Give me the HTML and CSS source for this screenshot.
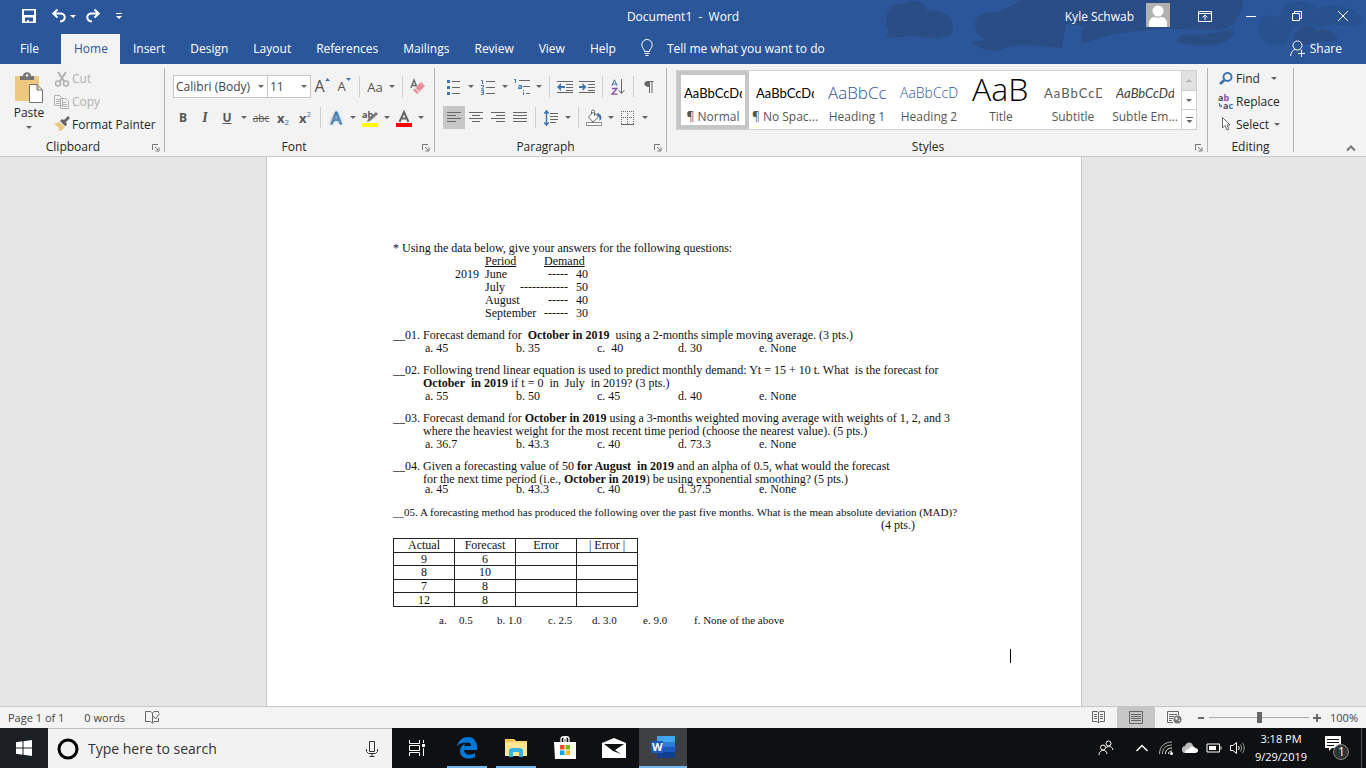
FILE: index.html
```
<!DOCTYPE html>
<html lang="en">

<head>
    <meta charset="UTF-8">
    <meta name="viewport" content="width=device-width, initial-scale=1.0">
    <title>Document1 - Word</title>
    <link rel="stylesheet" href="styles.css">
</head>

<body>
    <header class="header">
        <svg class="header-art" width="490" height="64" viewBox="0 0 490 64">
            <path d="M10 22C10 8 18 2 28 4C38 -2 48 0 52 12C62 8 78 14 77 26C78 34 72 38 68 36C64 42 40 34 24 37C16 37 12 40 10 38L13 31C11 29 10 26 10 22Z" />
            <path d="M99 24C99 14 110 12 120 12C140 6 142 0 146 0H367C366 12 362 22 352 28C340 34 300 26 274 30C234 32 218 40 206 44C205 36 206 30 208 26L190 24L186 48C160 46 142 42 124 50C110 52 102 48 95 42C98 40 106 42 110 40C102 36 99 30 99 24Z" />
            <path d="M306 34C326 36 342 32 356 29C360 32 356 38 350 41C340 46 320 48 300 42Z" />
            <path d="M418 38C420 26 434 22 440 30C452 28 462 32 461 40C450 44 438 38 432 44C424 46 418 44 418 38Z" />
            <path class="art-light" d="M384 36C376 18 394 10 404 18C404 -2 436 -4 440 10C452 0 484 6 486 22C476 32 458 20 446 28C430 20 412 26 410 44C398 46 388 44 384 36Z" />
        </svg>
        <div class="titlebar">
            <div class="title-side quick-access">
                <button aria-label="Save"><svg width="16" height="16" viewBox="0 0 16 16"><path fill="#fff" fill-rule="evenodd" d="M1 1H15V15H1ZM3 2.500V7H13V2.500ZM4 9.500V13.500H6V12H8V13.500H12V9.500Z" /></svg></button>
                <button aria-label="Undo"><svg width="16" height="16" viewBox="0 0 16 16"><path class="qa-line" d="M2 5.500H9.500C15 5.500 15.500 13 9 13.500M6.500 1.500L2.300 5.500L6.500 9.500" /></svg></button>
                <span class="caret white"></span>
                <button aria-label="Redo"><svg width="16" height="16" viewBox="0 0 16 16"><path class="qa-line" d="M14 5.500H6.500C1 5.500 .5 13 7 13.500M9.500 1.500L13.700 5.500L9.500 9.500" /></svg></button>
                <button aria-label="Customize toolbar"><svg width="8" height="8" viewBox="0 0 8 8"><path fill="#fff" d="M1 1H7V2H1ZM1 4H7L4 7Z" /></svg></button>
            </div>
            <div class="doc-title">Document1&nbsp; -&nbsp; Word</div>
            <div class="title-side account">
                <span>Kyle Schwab</span>
                <svg class="avatar" width="24" height="24" viewBox="0 0 24 24"><path fill="#b1b1b1" d="M0 0H24V24H0Z" /><circle cx="12" cy="8" r="5.500" fill="#fff" /><path fill="#fff" d="M3 24C2 17 5 14 9 14C11 15 13 15 15 14C19 14 22 17 21 24Z" /></svg>
                <button class="window-button" aria-label="Ribbon options"><svg width="14" height="12" viewBox="0 0 14 12"><path class="win-line" d="M.5 1.500H13.500V11.500H.5ZM.5 3.500H13.500M7 10V5M4.500 7.500L7 5L9.500 7.500" /></svg></button>
                <button class="window-button" aria-label="Minimize"><svg width="12" height="12" viewBox="0 0 12 12"><path class="win-line" d="M1 6.500H11" /></svg></button>
                <button class="window-button" aria-label="Restore"><svg width="12" height="12" viewBox="0 0 12 12"><path class="win-line" d="M1.500 3.500H8.500V10.500H1.500ZM3.500 3.500V1.500H10.500V8.500H8.500" /></svg></button>
                <button class="window-button" aria-label="Close"><svg width="12" height="12" viewBox="0 0 12 12"><path class="win-line" d="M1 1L11 11M11 1L1 11" /></svg></button>
            </div>
        </div>
        <nav class="tabs">
            <button class="tab file-tab">File</button>
            <button class="tab active">Home</button>
            <button class="tab">Insert</button>
            <button class="tab">Design</button>
            <button class="tab">Layout</button>
            <button class="tab">References</button>
            <button class="tab">Mailings</button>
            <button class="tab">Review</button>
            <button class="tab">View</button>
            <button class="tab">Help</button>
            <button class="tab tell-me"><svg width="12" height="18" viewBox="0 0 12 18"><path class="win-line" d="M3.500 12.500C3.500 10 .8 9 .8 5.700A5.200 5.200 0 0 1 11.200 5.700C11.200 9 8.500 10 8.500 12.500ZM3.500 14.500H8.500M4.500 16.500H7.500" /></svg>Tell me what you want to do</button>
            <button class="share"><svg width="16" height="17" viewBox="0 0 16 17"><circle class="win-line" cx="7.500" cy="5.500" r="4.500" /><path class="win-line" d="M.6 16C.8 12 3 9.800 5.500 9.300M9.500 9.300L10.500 10M8 13.500H15M11.500 10V17" /></svg>Share</button>
        </nav>
    </header>

    <div class="ribbon">
        <section class="group clipboard">
            <div class="group-body">
                <button class="paste">
                    <svg width="30" height="32" viewBox="0 0 30 32"><path fill="#edc87e" d="M1 5H25V30H1Z" /><path fill="#737373" d="M6 9V5H9C9 0 17 0 17 5H20V9Z" /><circle cx="13" cy="4.500" r="1.300" fill="#f3f3f3" /><path fill="#fff" stroke="#737373" d="M15.500 13.500H23L28.500 19V31.500H15.500ZM23 13.500V19H28.500" /></svg>
                    Paste
                    <span class="caret"></span>
                </button>
                <div class="command-list">
                    <button class="command disabled"><svg width="16" height="16" viewBox="0 0 16 16"><path fill="none" stroke="#b1b1b1" stroke-width="2" d="M4 1L10.500 11M12 1L5.500 11" /><g fill="none" stroke="#b1b1b1" stroke-width="1.500"><circle cx="4" cy="12.500" r="2.500" /><circle cx="12" cy="12.500" r="2.500" /></g></svg>Cut</button>
                    <button class="command disabled"><svg width="16" height="16" viewBox="0 0 16 16"><path fill="#f3f3f3" stroke="#b1b1b1" d="M.5 1.500H5.500L8.500 4.500V11.500H.5ZM2 5.500H6M2 7.500H6M2 9.500H6M6.500 4.500H11.500L14.500 7.500V14.500H6.500ZM8 8.500H12M8 10.500H13M8 12.500H13" /></svg>Copy</button>
                    <button class="command"><svg width="16" height="16" viewBox="0 0 16 16"><path fill="#edc87e" d="M0 8L5 6L11 11L7 15L4 14L5 12Z" /><path fill="#666" d="M6 5L8 3L10 4L14 0L16 2L12 6L13 9L11 10Z" /></svg>Format Painter</button>
                </div>
            </div>
            <div class="group-name">Clipboard<svg class="launcher" width="8" height="8" viewBox="0 0 8 8"><path fill="none" stroke="#777" d="M.5 6V.5H6M3 3L6 6M7 3.500V7H3.500" /></svg></div>
        </section>

        <section class="group font-group">
            <div class="group-body tool-rows">
                <div class="tool-row">
                    <label class="combo font-name"><select aria-label="Font"><option>Calibri (Body)</option></select><span class="caret"></span></label>
                    <label class="combo font-size"><select aria-label="Font size"><option>11</option></select><span class="caret"></span></label>
                    <button class="tool grow" aria-label="Grow font">A<svg width="5" height="3" viewBox="0 0 5 3"><path fill="#3f74b1" d="M0 3L2.500 0L5 3Z" /></svg></button>
                    <button class="tool grow shrink" aria-label="Shrink font">A<svg width="5" height="3" viewBox="0 0 5 3"><path fill="#3f74b1" d="M0 0L2.500 3L5 0Z" /></svg></button>
                    <span class="divider"></span>
                    <button class="tool change-case" aria-label="Change case">Aa</button><span class="caret"></span>
                    <span class="divider"></span>
                    <button class="tool" aria-label="Clear formatting"><svg width="16" height="16" viewBox="0 0 16 16"><path fill="none" stroke="#666" stroke-width="1.400" d="M1 9L4 1L6.500 7M2 6.500H6" /><path fill="#e8909c" d="M3 11L11 3L15 7L7 15Z" /><path stroke="#f3f3f3" d="M5 9L9 13" /></svg></button>
                </div>
                <div class="tool-row">
                    <button class="tool"><b>B</b></button>
                    <button class="tool italic">I</button>
                    <button class="tool underline">U</button><span class="caret"></span>
                    <button class="tool strike">abc</button>
                    <button class="tool script"><b>x</b><sub>2</sub></button>
                    <button class="tool script"><b>x</b><sup>2</sup></button>
                    <span class="divider"></span>
                    <button class="tool text-effect">A</button><span class="caret"></span>
                    <button class="tool" aria-label="Highlight"><svg width="16" height="20" viewBox="0 0 16 20"><text class="icon-text" x="0" y="10">ab</text><path fill="#777" d="M14 4L16 6L8 13L5 14L6 11Z" /><path fill="#ffff00" d="M0 15H16V19H0Z" /></svg></button><span class="caret"></span>
                    <button class="tool" aria-label="Font color"><svg width="16" height="20" viewBox="0 0 16 20"><path fill="none" stroke="#666" stroke-width="2" d="M3.500 14L8 4L12.500 14M5 10.500H11" /><path fill="#f00" d="M0 15H16V19H0Z" /></svg></button><span class="caret"></span>
                </div>
            </div>
            <div class="group-name">Font<svg class="launcher" width="8" height="8" viewBox="0 0 8 8"><path fill="none" stroke="#777" d="M.5 6V.5H6M3 3L6 6M7 3.500V7H3.500" /></svg></div>
        </section>

        <section class="group paragraph-group">
            <div class="group-body tool-rows">
                <div class="tool-row">
                    <button class="tool" aria-label="Bullets"><svg width="14" height="16" viewBox="0 0 14 16"><path fill="#3f74b1" d="M0 1H3V4H0ZM0 7H3V10H0ZM0 13H3V16H0Z" /><path class="line" d="M5 2.500H13M5 8.500H13M5 14.500H13" /></svg></button><span class="caret"></span>
                    <button class="tool" aria-label="Numbering"><svg width="16" height="16" viewBox="0 0 16 16"><path class="blue-line" d="M1 1.500H2.500V5M1 6.500H3.500V8L1.500 10H4M1 11.500H3.500V15.500H1M1.500 13.500H3.500" /><path class="line" d="M6 2.500H15M6 8.500H15M6 14.500H15" /></svg></button><span class="caret"></span>
                    <button class="tool" aria-label="Multilevel list"><svg width="16" height="16" viewBox="0 0 16 16"><path class="blue-line" d="M0 .5H1.500V4M4.500 6.500H7.500V9.500H4.500V8H7M9.500 13V16M9.500 11V12" /><path class="line" d="M5 1.500H16M9 7.500H16M12 14.500H16" /></svg></button><span class="caret"></span>
                    <span class="divider"></span>
                    <button class="tool" aria-label="Decrease indent"><svg width="16" height="12" viewBox="0 0 16 12"><path class="line" d="M0 .5H16M9 3.500H16M9 6.500H16M9 9.500H16M0 11.500H16" /><path fill="#3f74b1" d="M0 6L4 2V5H8V7H4V10Z" /></svg></button>
                    <button class="tool" aria-label="Increase indent"><svg width="16" height="12" viewBox="0 0 16 12"><path class="line" d="M0 .5H16M9 3.500H16M9 6.500H16M9 9.500H16M0 11.500H16" /><path fill="#3f74b1" d="M7.500 6L3.500 2V5H0V7H3.500V10Z" /></svg></button>
                    <span class="divider"></span>
                    <button class="tool" aria-label="Sort"><svg width="14" height="16" viewBox="0 0 14 16"><path class="blue-line" d="M.8 7L3.500 .8L6.200 7M1.500 5H5.500" /><path fill="none" stroke="#8a4fae" stroke-width="1.300" d="M1 9.500H6L1 15.200H6.500" /><path class="line" d="M10.500 0V14M7.500 11L10.500 14.500L13.500 11" /></svg></button>
                    <span class="divider"></span>
                    <button class="tool" aria-label="Show marks"><svg width="10" height="14" viewBox="0 0 10 14"><path fill="#666" d="M9.500 1V2H8.500V13H7.500V2H6V13H5V7C-1 7 -1 1 4 1Z" /></svg></button>
                </div>
                <div class="tool-row">
                    <button class="tool selected" aria-label="Align left"><svg width="14" height="12" viewBox="0 0 14 12"><path class="line" d="M0 .5H14M0 3.500H9M0 6.500H14M0 9.500H9" /></svg></button>
                    <button class="tool" aria-label="Center"><svg width="14" height="12" viewBox="0 0 14 12"><path class="line" d="M0 .5H14M3 3.500H11M0 6.500H14M3 9.500H11" /></svg></button>
                    <button class="tool" aria-label="Align right"><svg width="14" height="12" viewBox="0 0 14 12"><path class="line" d="M0 .5H14M5 3.500H14M0 6.500H14M5 9.500H14" /></svg></button>
                    <button class="tool" aria-label="Justify"><svg width="14" height="12" viewBox="0 0 14 12"><path class="line" d="M0 .5H14M0 3.500H14M0 6.500H14M0 9.500H14" /></svg></button>
                    <span class="divider"></span>
                    <button class="tool" aria-label="Line spacing"><svg width="14" height="16" viewBox="0 0 14 16"><path class="blue-line" stroke-width="1.500" d="M2.500 1V15M.3 3.500L2.500 1L4.700 3.500M.3 12.500L2.500 15L4.700 12.500" /><path class="line" d="M6 3.500H14M6 6.500H14M6 9.500H14M6 12.500H12" /></svg></button><span class="caret"></span>
                    <span class="divider"></span>
                    <button class="tool" aria-label="Shading"><svg width="16" height="16" viewBox="0 0 16 16"><path fill="#fff" stroke="#666" d="M2.500 7L7.500 2L12.500 7L7 12ZM5.500 4V1.500A1.500 1.500 0 0 1 8.500 1.500V6" /><path fill="#3f74b1" d="M11 3C16 4 17 9 13.500 11C14 8 13 6 11 5Z" /><path fill="#fff" stroke="#888" d="M.5 12.500H15.500V15.500H.5Z" /></svg></button><span class="caret"></span>
                    <button class="tool" aria-label="Borders"><svg width="14" height="14" viewBox="0 0 14 14"><path class="line" stroke-dasharray="1 1" d="M0 .5H13M.5 0V13M12.500 0V13M6.500 0V13M0 6.500H13" /><path class="line" d="M0 13.500H13" /></svg></button><span class="caret"></span>
                </div>
            </div>
            <div class="group-name">Paragraph<svg class="launcher" width="8" height="8" viewBox="0 0 8 8"><path fill="none" stroke="#777" d="M.5 6V.5H6M3 3L6 6M7 3.500V7H3.500" /></svg></div>
        </section>

        <section class="group styles-group">
            <div class="group-body">
                <div class="gallery">
                    <button class="style-item chosen"><span class="sample">AaBbCcDd</span>¶ Normal</button>
                    <button class="style-item"><span class="sample">AaBbCcDd</span>¶ No Spac...</button>
                    <button class="style-item"><span class="sample heading-one">AaBbCc</span>Heading 1</button>
                    <button class="style-item"><span class="sample heading-two">AaBbCcD</span>Heading 2</button>
                    <button class="style-item"><span class="sample title-sample">AaB</span>Title</button>
                    <button class="style-item"><span class="sample subtitle">AaBbCcD</span>Subtitle</button>
                    <button class="style-item"><span class="sample subtle">AaBbCcDd</span>Subtle Em...</button>
                    <div class="gallery-scroll">
                        <button class="off" aria-label="Up"><span class="caret up"></span></button>
                        <button aria-label="Down"><span class="caret"></span></button>
                        <button aria-label="More"><svg width="8" height="8" viewBox="0 0 8 8"><path fill="#666" d="M1 1H8V2H1ZM1.500 4H7.500L4.500 7Z" /></svg></button>
                    </div>
                </div>
            </div>
            <div class="group-name">Styles<svg class="launcher" width="8" height="8" viewBox="0 0 8 8"><path fill="none" stroke="#777" d="M.5 6V.5H6M3 3L6 6M7 3.500V7H3.500" /></svg></div>
        </section>

        <section class="group editing">
            <div class="group-body">
                <div class="command-list">
                    <button class="command"><svg width="16" height="16" viewBox="0 0 16 16"><g fill="none" stroke="#3f74b1"><circle cx="9.500" cy="6" r="4" stroke-width="2" /><path stroke-width="3" d="M6.500 9L2 13" /></g></svg>Find<span class="caret spaced"></span></button>
                    <button class="command"><svg width="16" height="16" viewBox="0 0 16 16"><text class="icon-text" x="0" y="7">a<tspan fill="#8a4fae">b</tspan></text><text class="icon-text" x="5" y="15">a<tspan fill="#3f74b1">c</tspan></text><path class="blue-line" d="M1.500 9V12H4M2.500 10.500L4 12L2.500 13.500" /></svg>Replace</button>
                    <button class="command"><svg width="16" height="16" viewBox="0 0 16 16"><path fill="#fff" stroke="#666" d="M4.500 1.500V12L7 9.500L9 14L11 13L9 9H12Z" /></svg>Select<span class="caret"></span></button>
                </div>
            </div>
            <div class="group-name">Editing</div>
        </section>
        <button class="collapse" aria-label="Collapse ribbon"><svg width="10" height="7" viewBox="0 0 10 7"><path fill="none" stroke="#777" stroke-width="2" d="M1 5.500L5 1.500L9 5.500" /></svg></button>
    </div>

    <main class="canvas">
        <article class="page">
            <div class="question">
                <p>* Using the data below, give your answers for the following questions:</p>
                <div class="demand"><span></span><u>Period</u><u>Demand</u></div>
                <div class="demand"><span>2019</span><span>June</span><span class="dashes">-----</span><span>40</span></div>
                <div class="demand"><span></span><span>July</span><span class="dashes">------------</span><span>50</span></div>
                <div class="demand"><span></span><span>August</span><span class="dashes">-----</span><span>40</span></div>
                <div class="demand"><span></span><span>September</span><span class="dashes">------</span><span>30</span></div>
            </div>
            <div class="question">
                <p>__01. Forecast demand for&nbsp; <b>October in 2019</b>&nbsp; using a 2-months simple moving average. (3 pts.)</p>
                <div class="choices"><span>a. 45</span><span>b. 35</span><span>c.&nbsp; 40</span><span>d. 30</span><span>e. None</span></div>
            </div>
            <div class="question">
                <p>__02. Following trend linear equation is used to predict monthly demand: Yt = 15 + 10 t. What&nbsp; is the forecast for</p>
                <p class="indent"><b>October&nbsp; in 2019</b> if t = 0&nbsp; in&nbsp; July&nbsp; in 2019? (3 pts.)</p>
                <div class="choices"><span>a. 55</span><span>b. 50</span><span>c. 45</span><span>d. 40</span><span>e. None</span></div>
            </div>
            <div class="question">
                <p>__03. Forecast demand for <b>October in 2019</b> using a 3-months weighted moving average with weights of 1, 2, and 3</p>
                <p class="indent">where the heaviest weight for the most recent time period (choose the nearest value). (5 pts.)</p>
                <div class="choices"><span>a. 36.7</span><span>b. 43.3</span><span>c. 40</span><span>d. 73.3</span><span>e. None</span></div>
            </div>
            <div class="question">
                <p>__04. Given a forecasting value of 50 <b>for August&nbsp; in 2019</b> and an alpha of 0.5, what would the forecast</p>
                <p class="indent">for the next time period (i.e., <b>October in 2019</b>) be using exponential smoothing? (5 pts.)</p>
                <div class="choices tight"><span>a. 45</span><span>b. 43.3</span><span>c. 40</span><span>d. 37.5</span><span>e. None</span></div>
            </div>
            <div class="question final">
                <p class="small">__05. A forecasting method has produced the following over the past five months. What is the mean absolute deviation (MAD)?</p>
                <p class="points">(4 pts.)</p>
            </div>
            <table class="error-table">
                <tr><th>Actual</th><th>Forecast</th><th>Error</th><th>| Error |</th></tr>
                <tr><td>9</td><td>6</td><td></td><td></td></tr>
                <tr><td>8</td><td>10</td><td></td><td></td></tr>
                <tr><td>7</td><td>8</td><td></td><td></td></tr>
                <tr><td>12</td><td>8</td><td></td><td></td></tr>
            </table>
            <div class="choices small last"><span>a.</span><span>0.5</span><span>b. 1.0</span><span>c. 2.5</span><span>d. 3.0</span><span>e. 9.0</span><span>f. None of the above</span></div>
            <div class="insertion"><span></span></div>
        </article>
    </main>

    <footer class="statusbar">
        <span>Page 1 of 1</span>
        <span>0 words</span>
        <svg width="15" height="13" viewBox="0 0 15 13"><path class="line" d="M7.500 11.500V2L5.500 .5H.5V10.500H5.500L7.500 12.500L9 10.500H13.500V7M7.500 2L9 .5H13.500V2M8 5L10.500 8L14.500 2.500" /></svg>
        <div class="view-buttons">
            <button aria-label="Read mode"><svg width="13" height="13" viewBox="0 0 13 13"><path class="line" d="M6.500 1.500V12M.5 .5H5L6.500 1.500L8 .5H12.500V10.500H8L6.500 12L5 10.500H.5ZM2 3.500H5M2 5.500H5M2 7.500H5M8 3.500H11M8 5.500H11M8 7.500H11" /></svg></button>
            <button class="selected" aria-label="Print layout"><svg width="14" height="13" viewBox="0 0 14 13"><path class="line" d="M.5 .5H13.500V12.500H.5ZM2 3.500H12M2 5.500H12M2 7.500H12M2 9.500H12" /></svg></button>
            <button aria-label="Web layout"><svg width="15" height="13" viewBox="0 0 15 13"><path class="line" d="M6 11.500H.5V.5H11.500V4M2 3.500H10M2 5.500H7M2 7.500H6M2 9.500H5" /><circle cx="10.500" cy="8.500" r="4" fill="#777" /><path fill="#f3f3f3" d="M8 7L10 6L11 8L9 9ZM11 10L13 8L13 10Z" /></svg></button>
        </div>
        <button class="zoom-step" aria-label="Zoom out"><svg width="8" height="8" viewBox="0 0 8 8"><path fill="#666" d="M1 3H7V5H1Z" /></svg></button>
        <input class="zoom-slider" type="range" min="0" max="100" value="50" aria-label="Zoom">
        <button class="zoom-step" aria-label="Zoom in"><svg width="8" height="8" viewBox="0 0 8 8"><path fill="#666" d="M0 3H3V0H5V3H8V5H5V8H3V5H0Z" /></svg></button>
        <span class="zoom-value">100%</span>
    </footer>

    <div class="taskbar">
        <button class="start" aria-label="Start"><svg width="16" height="16" viewBox="0 0 16 16"><path fill="#fff" d="M0 2.300L6.500 1.300V7.500H0ZM7.500 1.200L16 0V7.500H7.500ZM0 8.500H6.500V14.700L0 13.700ZM7.500 8.500H16V16L7.500 14.800Z" /></svg></button>
        <label class="search">
            <svg width="22" height="22" viewBox="0 0 22 22"><circle cx="11" cy="11" r="9" fill="none" stroke="#000" stroke-width="3" /></svg>
            <input type="text" placeholder="Type here to search">
            <svg width="12" height="16" viewBox="0 0 12 16"><path fill="none" stroke="#333" d="M3.500 .5H8.500V10.500H3.500ZM.5 8V10.500L2.500 12.500H9.500L11.500 10.500V8M6 12.500V15.500M3.500 15.500H8.500" /></svg>
        </label>
        <div class="tasks">
            <button class="task" aria-label="Task view"><svg width="18" height="16" viewBox="0 0 18 16"><path class="win-line" d="M1.500 0V3.500H11.500V0M1.500 16V12.500H11.500V16M1.500 5.500H11.500V10.500H1.500ZM15.500 0V3M15.500 8V16" /><path fill="#fff" d="M14 4H17V7H14Z" /></svg></button>
            <button class="task open" aria-label="Edge"><svg width="22" height="22" viewBox="0 0 22 22"><path fill="#0078d7" fill-rule="evenodd" d="M1 10C2 3 7 0 12 0C18 0 21 5 21 10V13H8C8 18 15 19 19 16V20C13 23 4 22 4 14C4 10 7 7 11 6C5 5 2 8 1 10ZM8 9H15C15 4 9 5 8 9Z" /></svg></button>
            <button class="task open" aria-label="File Explorer"><svg width="22" height="20" viewBox="0 0 22 20"><path fill="#f8d775" d="M0 1H9L11 3H22V18H0Z" /><path fill="#ffe795" d="M0 5H22V18H0Z" /><path fill="#f0b429" d="M1 2H8V3H1Z" /><path fill="#34b4e3" d="M4 19V12L6 10H16L18 12V19H14V14H8V19Z" /></svg></button>
            <button class="task" aria-label="Store"><svg width="24" height="24" viewBox="0 0 24 24"><path fill="none" stroke="#fff" stroke-width="1.300" d="M8 6V3C8 0 13 0 13 3V6M11 6V3C11 0 16 0 16 3V6" /><path fill="#fff" d="M1 6H23V23H2Z" /><path fill="#f25022" d="M7 9H11.500V13.500H7Z" /><path fill="#7fba00" d="M12.500 9H17V13.500H12.500Z" /><path fill="#00a4ef" d="M7 14.500H11.500V19H7Z" /><path fill="#ffb900" d="M12.500 14.500H17V19H12.500Z" /></svg></button>
            <button class="task" aria-label="Mail"><svg width="24" height="20" viewBox="0 0 24 20"><path fill="#fff" d="M0 5L12 0L24 5V20H0Z" /><path fill="#0f1011" d="M2 6H22L13 12L19 16L11 13Z" /></svg></button>
            <button class="task current" aria-label="Word"><svg width="24" height="22" viewBox="0 0 24 22"><path fill="#41a5ee" d="M6 0H24V6H6Z" /><path fill="#2b7cd3" d="M6 6H24V11H6Z" /><path fill="#185abd" d="M6 11H24V16H6Z" /><path fill="#103f91" d="M6 16H24V22H6Z" /><path fill="#1e5bb8" d="M0 5H12V17H0Z" /><text class="word-letter" x="1" y="15">W</text></svg></button>
        </div>
        <div class="tray">
            <button class="people" aria-label="People"><svg width="16" height="16" viewBox="0 0 16 16"><g class="win-line"><circle cx="10.500" cy="3.500" r="2.500" /><circle cx="5" cy="7.500" r="2.500" /><path d="M1 15C1 9 9 9 9 14M8 7.500C11 5.500 15 7 15 10" /></g></svg></button>
            <button aria-label="Hidden icons"><svg width="12" height="8" viewBox="0 0 12 8"><path class="win-line" stroke-width="1.500" d="M.5 7L6 1.500L11.500 7" /></svg></button>
            <button aria-label="Network"><svg width="14" height="14" viewBox="0 0 14 14"><path fill="none" stroke="#aaa" d="M.5 13C.5 5 6 1 13 1M3.500 13C3.500 7 7 4 13 4" /><path class="win-line" d="M6.500 13C6.500 9 9 7 13 7M9.500 13C9.500 11 11 10 13 10" /><circle cx="12.500" cy="12.500" r="1.500" fill="#fff" /></svg></button>
            <button aria-label="OneDrive"><svg width="16" height="12" viewBox="0 0 16 12"><path fill="#bbb" d="M0 8C0 5 1 4 3 4C4 0 9 -1 11 3L8 11H3C1 11 0 10 0 8Z" /><path fill="#fff" d="M3 11C3 8 5 7 7 7C8 4 12 3 13 6C17 6 17 11 13 11Z" /></svg></button>
            <button aria-label="Battery"><svg width="16" height="10" viewBox="0 0 16 10"><path class="win-line" d="M1 1H13.500V9H1ZM15 3.500V6.500" /><path fill="#fff" d="M3 3H10V7H3Z" /></svg></button>
            <button aria-label="Volume"><svg width="16" height="14" viewBox="0 0 16 14"><path class="win-line" d="M.5 4.500H3L6.500 1.500V12.500L3 9.500H.5ZM8.500 5Q10 7 8.500 9" /><path fill="none" stroke="#999" d="M10.500 3.500Q13 7 10.500 10.500M12.500 2Q16 7 12.500 12" /></svg></button>
            <div class="clock"><span>3:18 PM</span><span>9/29/2019</span></div>
            <button class="notifications" aria-label="Notifications"><svg width="24" height="24" viewBox="0 0 24 24"><path fill="#fff" d="M0 0H16V12H7L4 15V12H0Z" /><path stroke="#111" d="M2 3.500H14M2 6.500H14M2 9.500H9" /><circle cx="16" cy="16" r="7.500" fill="#333" stroke="#888" /><text class="badge-text" x="13" y="20">1</text></svg></button>
        </div>
    </div>
</body>

</html>
```
FILE: styles.css
```
* {
    box-sizing: border-box;
}

body {
    margin: 0;
    height: 100vh;
    display: flex;
    flex-direction: column;
    font-family: "Open Sans", "Noto Sans", sans-serif;
    font-size: 12px;
    color: #262626;
    overflow: hidden;
}

button,
input,
select {
    font: inherit;
    color: inherit;
    background: none;
    border: none;
    padding: 0;
    margin: 0;
    white-space: nowrap;
}

p {
    margin: 0;
}

svg {
    flex: none;
    display: block;
    overflow: visible;
}

.line {
    fill: none;
    stroke: #666;
}

.blue-line {
    fill: none;
    stroke: #3f74b1;
}

.win-line {
    fill: none;
    stroke: #fff;
}

.qa-line {
    fill: none;
    stroke: #fff;
    stroke-width: 2;
}

.icon-text {
    font-size: 9px;
    font-weight: bold;
    fill: #555;
}

.caret {
    width: 12px;
    flex: none;
    display: inline-flex;
    justify-content: center;
}

.caret::before {
    content: "";
    border: 3px solid transparent;
    border-top-color: #666;
    border-bottom: none;
}

.caret.up::before {
    border-top: none;
    border-bottom: 3px solid #b1b1b1;
}

.caret.white::before {
    border-top-color: #fff;
}

.caret.spaced {
    margin-left: 6px;
}

/* title bar and tabs */
.header {
    position: relative;
    flex: none;
    background-color: #2b579a;
    color: #fff;
}

.header-art {
    position: absolute;
    top: 0;
    right: 0;
    overflow: hidden;
    fill: #2a4d85;
}

.art-light {
    fill: #28528f;
}

.titlebar,
.tabs {
    position: relative;
    display: flex;
    align-items: center;
    height: 32px;
    white-space: nowrap;
}

.title-side {
    flex: 1;
    display: flex;
    align-items: center;
}

.quick-access button {
    margin-right: 14px;
}

.quick-access button:first-child {
    margin-left: 21px;
}

.quick-access button:nth-child(2) {
    margin-right: 0;
}

.quick-access .caret {
    margin-right: 6px;
}

.account {
    justify-content: flex-end;
}

.avatar {
    margin: 0 12px 2px;
}

.window-button {
    width: 46px;
    height: 32px;
    display: flex;
    justify-content: center;
    align-items: center;
}

.tabs {
    align-items: flex-end;
}

.tab {
    height: 30px;
    padding: 0 12px 2px 13px;
}

.file-tab {
    padding: 0 22px 2px 20px;
}

.tab.active {
    background-color: #f3f3f3;
    color: #2b579a;
}

.tell-me,
.share {
    display: flex;
    align-items: center;
    gap: 14px;
    height: 30px;
}

.share {
    margin-left: auto;
    gap: 4px;
    padding: 0 24px 2px 0;
}

/* ribbon */
.ribbon {
    flex: none;
    display: flex;
    height: 93px;
    padding: 4px 0;
    background-color: #f3f3f3;
    border-bottom: 1px solid #c8c8c8;
}

.group {
    flex: none;
    display: flex;
    flex-direction: column;
    border-right: 1px solid #b5b5b5;
}

.group-body {
    flex: 1;
    min-height: 0;
    display: flex;
}

.group-name {
    position: relative;
    height: 16px;
    line-height: 22px;
    padding-right: 18px;
    text-align: center;
}

.launcher {
    position: absolute;
    right: 4px;
    bottom: 0;
}

.clipboard {
    width: 165px;
}

.font-group {
    width: 270px;
    padding-left: 7px;
}

.paragraph-group {
    width: 232px;
    padding-left: 8px;
}

.styles-group {
    flex: 1;
    min-width: 0;
}

.editing {
    width: 86px;
}

.editing .group-name {
    padding-right: 0;
}

.paste {
    width: 49px;
    padding: 3px 0 0 9px;
    display: flex;
    flex-direction: column;
    align-items: center;
    gap: 1px;
}

.paste .caret {
    margin-top: 4px;
}

.command-list {
    display: flex;
    flex-direction: column;
    padding-left: 5px;
}

.editing .command-list {
    padding-left: 10px;
}

.command {
    display: flex;
    align-items: center;
    gap: 2px;
    height: 23px;
    padding-bottom: 1px;
}

.command.disabled {
    color: #b1b1b1;
}

.tool-rows {
    flex-direction: column;
    gap: 8px;
    padding-top: 7px;
}

.tool-row {
    display: flex;
    align-items: center;
    height: 23px;
}

.tool {
    width: 22px;
    height: 23px;
    flex: none;
    display: flex;
    justify-content: center;
    align-items: center;
    color: #555;
}

.selected {
    background-color: #c6c6c6;
}

.divider {
    width: 1px;
    height: 21px;
    margin: 0 4px;
    background-color: #d0d0d0;
}

.combo {
    display: flex;
    align-items: center;
    height: 23px;
    border: 1px solid #c6c6c6;
    background-color: #fff;
    color: #444;
}

.combo select {
    flex: 1;
    min-width: 0;
    appearance: none;
    padding-left: 2px;
}

.font-name {
    width: 95px;
    margin-left: 1px;
}

.font-size {
    width: 43px;
    border-left: none;
}

.grow {
    font-size: 16px;
    align-items: flex-start;
    line-height: 22px;
}

.shrink {
    font-size: 13px;
}

.grow svg {
    margin-top: 3px;
}

.change-case {
    font-size: 13px;
}

.italic {
    font-family: "Liberation Serif", serif;
    font-style: italic;
    font-weight: bold;
    font-size: 14px;
}

.underline {
    font-weight: bold;
    text-decoration: underline;
}

.strike {
    font-size: 10px;
    text-decoration: line-through;
}

.script b {
    font-size: 13px;
}

.script sub,
.script sup {
    font-size: 8px;
    line-height: 8px;
    color: #3f74b1;
    align-self: flex-end;
    margin-bottom: 3px;
}

.script sup {
    align-self: flex-start;
    margin-top: 4px;
}

.text-effect {
    font-size: 17px;
    color: #fff;
    -webkit-text-stroke: 1px #3f74b1;
    text-shadow: 0 0 3px #7ba7d8;
}

.gallery {
    flex: 1;
    display: flex;
    height: 60px;
    margin: 2px 10px 0 9px;
    background-color: #fff;
    border: 1px solid #d0d0d0;
    overflow: hidden;
}

.style-item {
    width: 72px;
    flex: none;
    display: flex;
    flex-direction: column;
    align-items: center;
    padding-top: 7px;
    color: #555;
    line-height: 16px;
}

.style-item.chosen {
    outline: 4px solid #c6c6c6;
    outline-offset: -4px;
}

.sample {
    width: 58px;
    height: 31px;
    line-height: 30px;
    overflow: hidden;
    text-align: left;
    font-family: Lato, sans-serif;
    font-size: 13px;
    color: #000;
}

.heading-one {
    font-family: "Open Sans", sans-serif;
    font-weight: 300;
    font-size: 17px;
    color: #2f5496;
}

.heading-two {
    font-family: "Open Sans", sans-serif;
    font-weight: 300;
    font-size: 14px;
    color: #2f5496;
}

.title-sample {
    font-family: "Open Sans", sans-serif;
    font-weight: 300;
    font-size: 32px;
    line-height: 22px;
}

.subtitle {
    letter-spacing: 1px;
    color: #5a5a5a;
}

.subtle {
    font-style: italic;
    color: #404040;
}

.gallery-scroll {
    width: 15px;
    margin-left: auto;
    flex: none;
    display: flex;
    flex-direction: column;
    border-left: 1px solid #d0d0d0;
}

.gallery-scroll button {
    flex: 1;
    display: flex;
    justify-content: center;
    align-items: center;
    border-top: 1px solid #d0d0d0;
}

.gallery-scroll .off {
    background-color: #e1e1e1;
    border-top: none;
}

.collapse {
    width: 72px;
    display: flex;
    justify-content: flex-end;
    align-items: flex-end;
    padding-right: 10px;
}

/* document */
.canvas {
    flex: 1;
    min-height: 0;
    padding-right: 18px;
    background-color: #e6e6e6;
    overflow: hidden;
}

.page {
    max-width: 816px;
    height: 100%;
    margin: 0 auto;
    padding: 85px 70px 0 126px;
    background-color: #fff;
    border: solid #c6c6c6;
    border-width: 0 1px;
    font-family: "Liberation Serif", serif;
    font-size: 12px;
    line-height: 13px;
    color: #111;
    white-space: nowrap;
}

.question {
    margin-bottom: 9px;
}

.question.final {
    margin: 10px 0 6px;
}

.small {
    font-size: 11px;
}

.demand {
    display: grid;
    grid-template-columns: 30px 59px 24px 32px;
    padding-left: 62px;
}

.demand .dashes {
    text-align: right;
    direction: rtl;
}

.demand span:last-child {
    padding-left: 8px;
}

.indent {
    padding-left: 30px;
}

.choices {
    display: grid;
    grid-template-columns: 91px 81px 81px 81px 80px;
    padding-left: 32px;
}

.choices.tight {
    margin-top: -3px;
}

.points {
    padding-left: 488px;
}

.error-table {
    width: 245px;
    height: 69px;
    table-layout: fixed;
    border-collapse: collapse;
    line-height: 12px;
    text-align: center;
}

.error-table th,
.error-table td {
    padding: 0;
    font-weight: normal;
    border: 1px solid #222;
}

.choices.last {
    grid-template-columns: 20px 38px 51px 44px 51px 51px 100px;
    padding: 7px 0 0 46px;
}

.insertion {
    display: flex;
    justify-content: flex-end;
    margin-top: 22px;
}

.insertion span {
    width: 1px;
    height: 14px;
    background-color: #000;
}

/* status bar */
.statusbar {
    flex: none;
    display: flex;
    align-items: center;
    height: 22px;
    padding: 0 8px;
    background-color: #f3f3f3;
    border-top: 1px solid #c6c6c6;
    font-size: 11px;
    color: #444;
    white-space: nowrap;
}

.statusbar > span:not(.zoom-value) {
    margin-right: 20px;
}

.view-buttons {
    display: flex;
    align-self: stretch;
    margin-left: auto;
}

.view-buttons button {
    width: 38px;
    display: flex;
    justify-content: center;
    align-items: center;
}

.zoom-step {
    display: flex;
    margin: 0 4px;
}

.zoom-slider {
    width: 100px;
    height: 16px;
    appearance: none;
    background: linear-gradient(#aaa, #aaa) center / 100% 1px no-repeat;
}

.zoom-slider::-webkit-slider-thumb {
    appearance: none;
    width: 5px;
    height: 11px;
    background-color: #666;
}

.zoom-value {
    width: 33px;
    text-align: right;
}

/* taskbar */
.taskbar {
    flex: none;
    display: flex;
    height: 40px;
    background-color: #0f1011;
    color: #fff;
}

.taskbar button {
    display: flex;
    justify-content: center;
    align-items: center;
}

.start {
    width: 48px;
    flex: none;
    background-color: #1b1e22;
}

.search {
    flex: 0 1 344px;
    display: flex;
    align-items: center;
    gap: 9px;
    padding: 0 14px 0 9px;
    background-color: #f2f2f2;
    border-top: 1px solid #c0c0c0;
}

.search input {
    flex: 1;
    min-width: 0;
    font-size: 14px;
    outline: none;
}

.search input::placeholder {
    color: #333;
    opacity: 1;
}

.tasks {
    display: flex;
    gap: 1px;
    padding-left: 1px;
}

.task {
    width: 48px;
    flex: none;
}

.task:first-child {
    margin-right: 1px;
}

.task.open {
    background: linear-gradient(#76b9ed, #76b9ed) bottom / 40px 2px no-repeat;
}

.task.current {
    background-color: #3e4043;
    border-bottom: 2px solid #76b9ed;
}

.word-letter {
    font-size: 11px;
    font-weight: bold;
    fill: #fff;
}

.tray {
    margin-left: auto;
    display: flex;
    align-items: stretch;
    padding-right: 4px;
}

.tray button {
    width: 24px;
}

.tray .people {
    margin-right: 12px;
}

.clock {
    width: 62px;
    display: flex;
    flex-direction: column;
    justify-content: center;
    align-items: center;
    line-height: 18px;
    font-size: 11px;
}

.tray .notifications {
    width: 50px;
    border-right: 1px solid #555;
}

.badge-text {
    font-size: 12px;
    fill: #fff;
}
```
